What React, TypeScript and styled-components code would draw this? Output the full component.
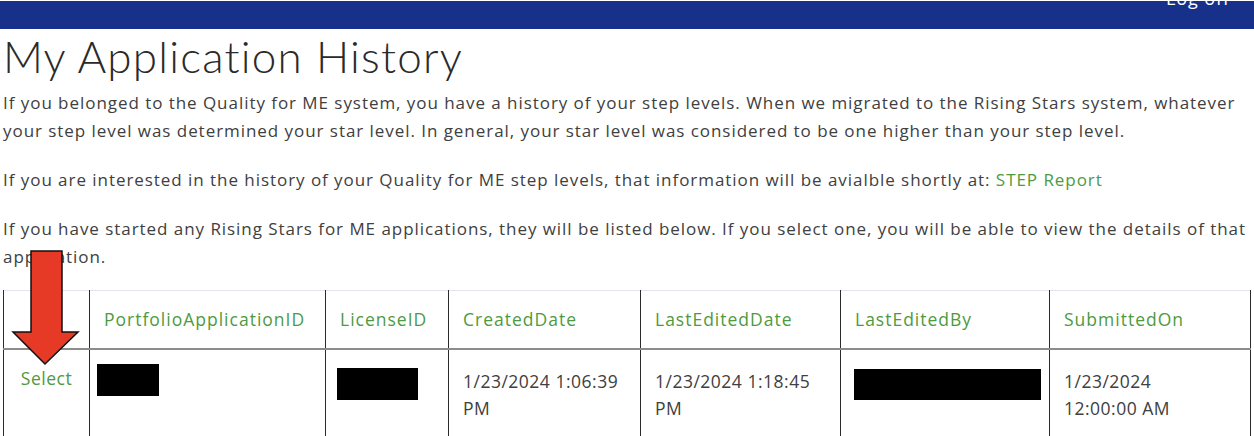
import React from 'react';
import styled, { createGlobalStyle } from 'styled-components';

const GlobalStyle = createGlobalStyle`
  html, body {
    margin: 0;
    padding: 0;
    background: #fff;
  }
  body {
    font-family: "Open Sans", Lato, sans-serif;
    color: #404040;
    overflow: hidden;
  }
`;

const Page = styled.div`
  position: relative;
  width: 1254px;
  height: 436px;
  overflow: hidden;
`;

const NavBar = styled.div`
  height: 28px;
  margin-top: 1px;
  background-color: #17318b;
  display: flex;
  justify-content: flex-end;
  align-items: flex-start;
  overflow: hidden;
  padding-right: 24px;
`;

const LogOff = styled.a`
  color: #fff;
  font-size: 18px;
  line-height: 20px;
  margin-top: -13px;
  letter-spacing: 0.9px;
  text-decoration: none;
`;

const Content = styled.div`
  padding: 0 4px 0 3px;
`;

const Title = styled.h1`
  font-family: Lato, sans-serif;
  font-weight: 300;
  font-size: 44px;
  line-height: 50px;
  margin: 2px 0 8px 0;
  color: #2a2a2a;
  letter-spacing: 1.2px;
`;

const Para = styled.p`
  font-size: 17px;
  line-height: 28px;
  margin: 0 0 21px 0;
  font-weight: 400;
  letter-spacing: 0.95px;
`;

const Link = styled.a`
  color: #4e9a3f;
  text-decoration: none;
`;

const Table = styled.table`
  border-collapse: collapse;
  table-layout: fixed;
  width: 1247px;
  margin-top: -2px;
  font-size: 17.5px;
  border-top: 1px solid #e4e4ec;
`;

const HeadCell = styled.th<{ $w: number }>`
  box-sizing: border-box;
  width: ${(p) => p.$w}px;
  text-align: left;
  font-weight: 400;
  letter-spacing: 1px;
  color: #4e9a3f;
  height: 58px;
  padding: 0 14px;
  vertical-align: middle;
  border-left: 1px solid #2b2b2b;
  border-right: 1px solid #2b2b2b;
  border-bottom: 2px solid #8c8c8c;
  white-space: nowrap;
  overflow: hidden;
`;

const Cell = styled.td<{ $center?: boolean }>`
  vertical-align: top;
  padding: 18px 6px 16px 14px;
  line-height: 27px;
  letter-spacing: 0.5px;
  border-left: 1px solid #2b2b2b;
  border-right: 1px solid #2b2b2b;
  text-align: ${(p) => (p.$center ? 'center' : 'left')};
`;

const SelectCell = styled(Cell)`
  padding: 15px 0 16px 0;
`;

const Redacted = styled.div<{ $w: number; $h: number; $dx: number; $dy: number }>`
  width: ${(p) => p.$w}px;
  height: ${(p) => p.$h}px;
  background: #000;
  margin-left: ${(p) => p.$dx}px;
  margin-top: ${(p) => p.$dy}px;
`;

const Arrow = styled.svg`
  position: absolute;
  left: 11px;
  top: 250px;
`;

const columns = [
  { label: '', w: 86 },
  { label: 'PortfolioApplicationID', w: 236 },
  { label: 'LicenseID', w: 123 },
  { label: 'CreatedDate', w: 192 },
  { label: 'LastEditedDate', w: 200 },
  { label: 'LastEditedBy', w: 209 },
  { label: 'SubmittedOn', w: 201 },
];

export default function App() {
  return (
    <Page>
      <GlobalStyle />
      <NavBar>
        <LogOff href="#">Log off</LogOff>
      </NavBar>
      <Content>
        <Title>My Application History</Title>
        <Para>
          If you belonged to the Quality for ME system, you have a history of your step levels. When we migrated to the
          Rising Stars system, whatever your step level was determined your star level. In general, your star level was
          considered to be one higher than your step level.
        </Para>
        <Para>
          If you are interested in the history of your Quality for ME step levels, that information will be avialble
          shortly at: <Link href="#">STEP Report</Link>
        </Para>
        <Para>
          If you have started any Rising Stars for ME applications, they will be listed below. If you select one, you
          will be able to view the details of that application.
        </Para>
        <Table>
          <thead>
            <tr>
              {columns.map((c) => (
                <HeadCell key={c.label} $w={c.w}>
                  {c.label}
                </HeadCell>
              ))}
            </tr>
          </thead>
          <tbody>
            <tr>
              <SelectCell $center>
                <Link href="#">Select</Link>
              </SelectCell>
              <Cell>
                <Redacted $w={62} $h={32} $dx={-7} $dy={-4} />
              </Cell>
              <Cell>
                <Redacted $w={81} $h={32} $dx={-3} $dy={0} />
              </Cell>
              <Cell>
                1/23/2024 1:06:39
                <br />
                PM
              </Cell>
              <Cell>
                1/23/2024 1:18:45
                <br />
                PM
              </Cell>
              <Cell>
                <Redacted $w={187} $h={31} $dx={-1} $dy={1} />
              </Cell>
              <Cell>
                1/23/2024
                <br />
                12:00:00 AM
              </Cell>
            </tr>
          </tbody>
        </Table>
      </Content>
      <Arrow width="70" height="118" viewBox="0 0 70 118">
        <polygon
          points="20,1 51,1 51,82 67,82 34,114 2,82 20,82"
          fill="#e63a27"
          stroke="#111"
          strokeWidth="1.5"
          strokeLinejoin="miter"
        />
      </Arrow>
    </Page>
  );
}
